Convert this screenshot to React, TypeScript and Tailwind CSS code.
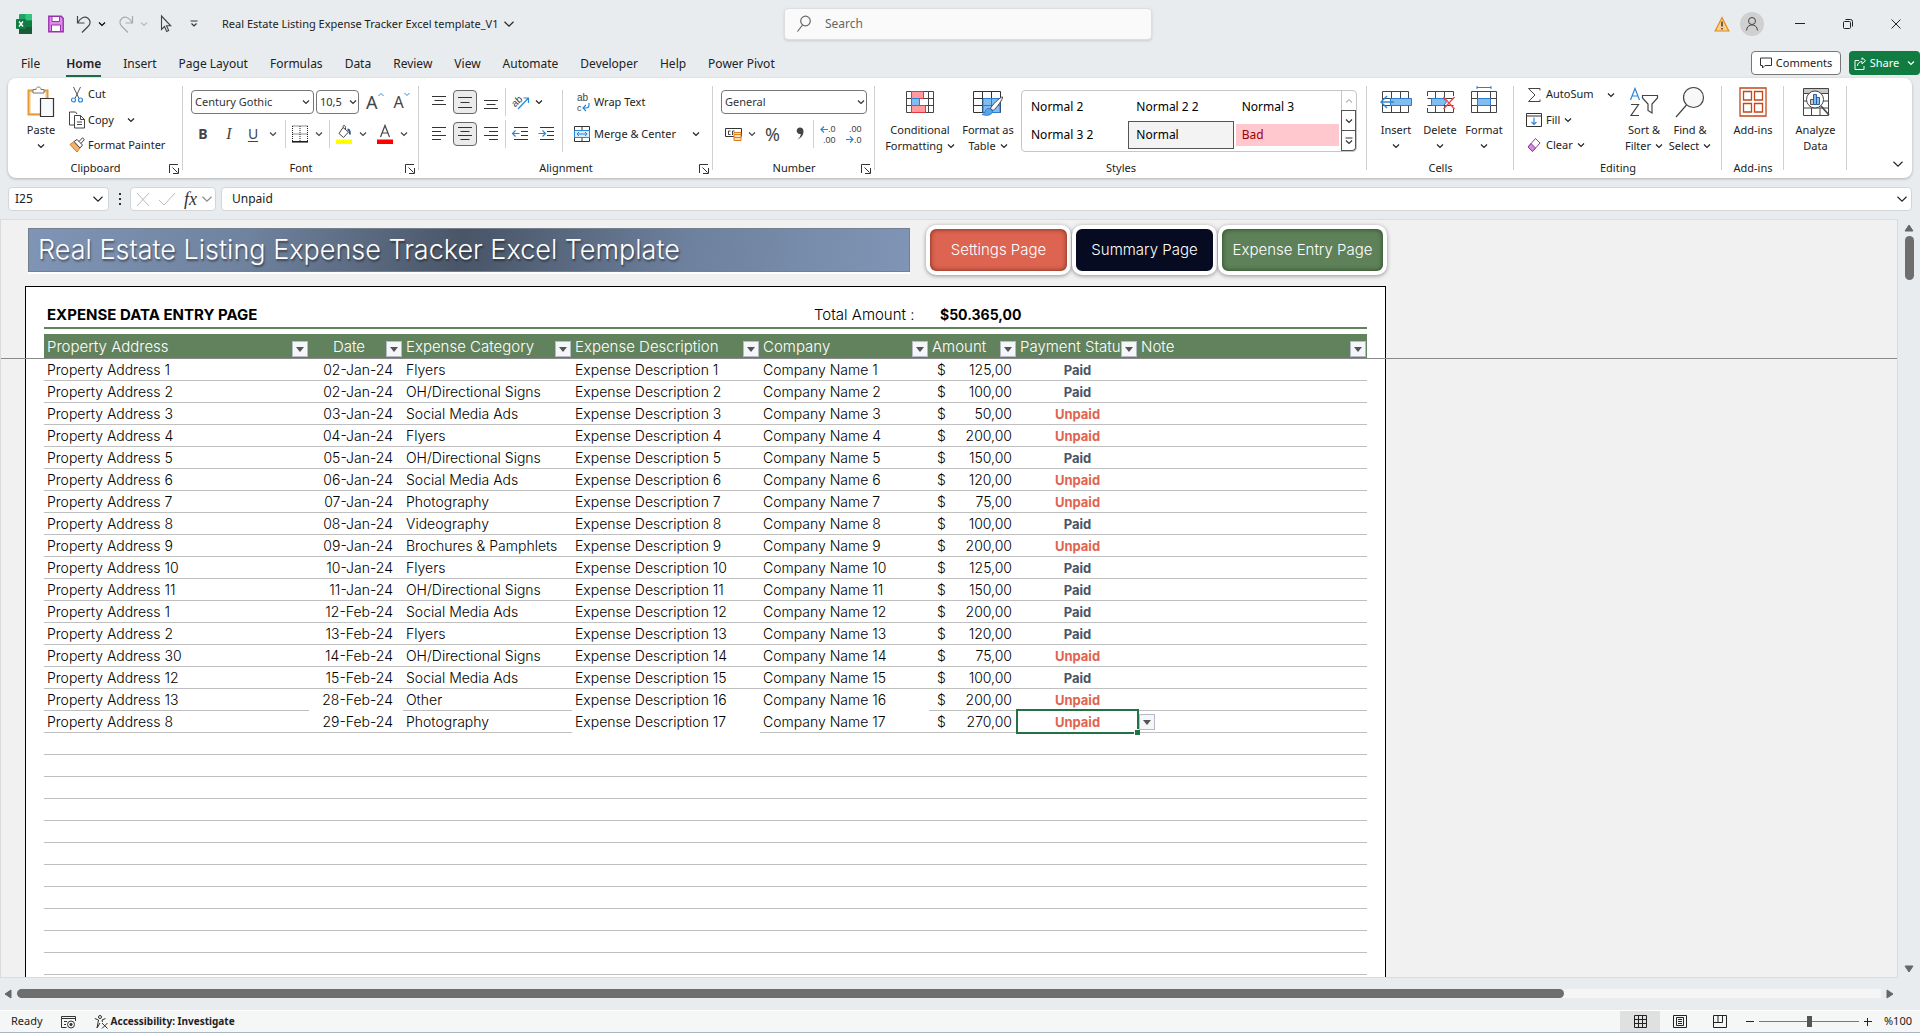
import { useState } from "react";
import type { ReactNode } from "react";
import clsx from "clsx";

type Status = "Paid" | "Unpaid";
type Expense = [string, string, string, string, Status];

// address, date, category, amount, status
const EXPENSES: Expense[] = [
  ["1", "02-Jan-24", "Flyers", "125,00", "Paid"],
  ["2", "02-Jan-24", "OH/Directional Signs", "100,00", "Paid"],
  ["3", "03-Jan-24", "Social Media Ads", "50,00", "Unpaid"],
  ["4", "04-Jan-24", "Flyers", "200,00", "Unpaid"],
  ["5", "05-Jan-24", "OH/Directional Signs", "150,00", "Paid"],
  ["6", "06-Jan-24", "Social Media Ads", "120,00", "Unpaid"],
  ["7", "07-Jan-24", "Photography", "75,00", "Unpaid"],
  ["8", "08-Jan-24", "Videography", "100,00", "Paid"],
  ["9", "09-Jan-24", "Brochures & Pamphlets", "200,00", "Unpaid"],
  ["10", "10-Jan-24", "Flyers", "125,00", "Paid"],
  ["11", "11-Jan-24", "OH/Directional Signs", "150,00", "Paid"],
  ["1", "12-Feb-24", "Social Media Ads", "200,00", "Paid"],
  ["2", "13-Feb-24", "Flyers", "120,00", "Paid"],
  ["30", "14-Feb-24", "OH/Directional Signs", "75,00", "Unpaid"],
  ["12", "15-Feb-24", "Social Media Ads", "100,00", "Paid"],
  ["13", "28-Feb-24", "Other", "200,00", "Unpaid"],
  ["8", "29-Feb-24", "Photography", "270,00", "Unpaid"],
];

const COLUMNS = [
  "Property Address",
  "Date",
  "Expense Category",
  "Expense Description",
  "Company",
  "Amount",
  "Payment Status",
  "Note",
];

const TABS = [
  "File",
  "Home",
  "Insert",
  "Page Layout",
  "Formulas",
  "Data",
  "Review",
  "View",
  "Automate",
  "Developer",
  "Help",
  "Power Pivot",
];

/* ---------- small shared pieces ---------- */

function Chevron({ size = 8, className }: { size?: number; className?: string }) {
  return (
    <svg width={size} height={size} viewBox="0 0 8 8" fill="none" stroke="currentColor" strokeWidth={size > 9 ? 0.75 : 1.2} className={clsx("shrink-0", className)}>
      <path d="M1 2.500 4 5.500 7 2.500" />
    </svg>
  );
}

function Svg({ w, h, children }: { w: number; h: number; children: ReactNode }) {
  return (
    <svg width={w} height={h} viewBox={`0 0 ${w} ${h}`} fill="none" stroke="#444" className="shrink-0 overflow-visible font-['Liberation_Sans']">
      {children}
    </svg>
  );
}

function Launcher() {
  return (
    <button aria-label="Open dialog" className="absolute right-1 bottom-1">
      <Svg w={10} h={10}>
        <path d="M.5 9V.5H9M3.500 3.500l5 5M9.500 4v5.500H4" stroke="#333" />
      </Svg>
    </button>
  );
}

function Group({ label, className, launcher, children }: { label: string; className: string; launcher?: boolean; children: ReactNode }) {
  return (
    <section className={clsx("relative shrink-0 flex flex-col", className)}>
      <div className="h-20 flex">{children}</div>
      <div className="h-5 text-center leading-5">{label}</div>
      {launcher && <Launcher />}
      <div className="absolute right-0 top-2 bottom-2 w-px bg-[#d0d0d0]" />
    </section>
  );
}

function BigButton({ icon, lines, arrow, className }: { icon: ReactNode; lines: string[]; arrow?: "below" | "inline"; className: string }) {
  return (
    <button className={clsx("flex flex-col items-center leading-4 pt-2", className)}>
      <span className="h-8 mb-1 flex items-center">{icon}</span>
      {lines.map((line, i) => (
        <span key={line} className="flex items-center gap-1 h-4 whitespace-nowrap">
          {line}
          {arrow === "inline" && i === lines.length - 1 && <Chevron />}
        </span>
      ))}
      {arrow === "below" && <Chevron className="mt-1" />}
    </button>
  );
}

function Divider({ className }: { className?: string }) {
  return <span className={clsx("w-px bg-[#d0d0d0] shrink-0", className ?? "h-7")} />;
}

function Lines({ rows, pressed, label }: { rows: string; pressed?: boolean; label: string }) {
  return (
    <button
      aria-label={label}
      className={clsx("w-6 h-6 flex items-center justify-center rounded-sm border", pressed ? "bg-[#ebebeb] border-[#666]" : "border-transparent")}
    >
      <Svg w={14} h={16}>
        <path d={rows} stroke="#333" />
      </Svg>
    </button>
  );
}

/* ---------- title bar and tabs ---------- */

function TitleBar() {
  return (
    <header className="h-12 flex items-center pl-4">
      <div className="flex-1 flex items-center">
        <Svg w={16} h={20}>
          <rect x="3" y="0" width="13" height="20" rx="1" fill="#21a366" stroke="none" />
          <path d="M9.500 0H16v6.500H9.500z" fill="#33c481" stroke="none" />
          <path d="M3 13h13v7H3z" fill="#185c37" stroke="none" />
          <path d="M9.500 6.500H16V13H9.500z" fill="#107c41" stroke="none" />
          <rect x="0" y="5" width="10" height="10" rx="1" fill="#107c41" stroke="none" />
          <path d="m3 7.500 4 5M7 7.500l-4 5" stroke="#fff" strokeWidth="1.400" />
        </Svg>
        <button aria-label="Save" className="ml-4">
          <Svg w={16} h={18}>
            <path d="M.8 1.200h12.400l2 2v13.600H.8z" fill="#dd8ce8" stroke="#9b2fae" strokeWidth="1.400" />
            <path d="M4 1.500h7.500v5H4zM3.500 10h9v6.500h-9z" fill="#fff" stroke="#9b2fae" />
          </Svg>
        </button>
        <button aria-label="Undo" className="ml-3 flex items-center gap-[6px]">
          <Svg w={16} h={20}>
            <path d="M1.500 2v7h7M1.800 8.500C5 3 9 2 12 4.200c3 2.500 2.500 6 0 8.300L6 18.500" strokeWidth="1.200" />
          </Svg>
          <Chevron />
        </button>
        <button aria-label="Redo" className="ml-3 flex items-center gap-[6px] text-[#bbb]">
          <svg width="16" height="20" viewBox="0 0 16 20" fill="none" stroke="#aaa" strokeWidth="1.200">
            <path d="M14.500 2v7h-7M14.200 8.500C11 3 7 2 4 4.200c-3 2.500-2.500 6 0 8.300l6 6" />
          </svg>
          <Chevron />
        </button>
        <button aria-label="Select objects" className="ml-3">
          <Svg w={12} h={18}>
            <path d="M1.500 1v13.500l3-3 2.200 5 2-1-2.200-4.700h4.200z" strokeWidth="1.100" />
          </Svg>
        </button>
        <button aria-label="Customize toolbar" className="ml-[18px]">
          <Svg w={8} h={8}>
            <path d="M.5 1h7M1.500 3.500 4 6l2.500-2.500" stroke="#333" strokeWidth="1.200" />
          </Svg>
        </button>
        <button className="ml-6 flex items-center gap-1 text-[11px] text-[#222]">
          Real Estate Listing Expense Tracker Excel template_V1
          <Chevron size={12} />
        </button>
      </div>
      <label className="w-[368px] h-8 flex items-center gap-[14px] px-3 rounded-sm bg-[#fafafa] border border-[#dcdfe1] shadow-sm">
        <Svg w={14} h={18}>
          <circle cx="8.500" cy="6" r="4.800" stroke="#666" strokeWidth="1.200" />
          <path d="m5.500 10-5 6.500" stroke="#666" strokeWidth="1.200" />
        </Svg>
        <input aria-label="Search" placeholder="Search" className="w-full bg-transparent outline-none text-xs placeholder:text-[#666]" />
      </label>
      <div className="flex-1 flex items-center justify-end">
        <Svg w={16} h={16}>
          <path d="m8 1.500 6.800 13.500H1.200z" fill="#fbd08f" stroke="#e08a1e" strokeWidth="1.200" />
          <path d="M8 5.500v5M8 12v1.500" stroke="#333" strokeWidth="1.400" />
        </Svg>
        <span className="ml-[10px] size-6 rounded-full bg-[#d0d0d0] flex items-center justify-center">
          <Svg w={14} h={16}>
            <circle cx="7" cy="5" r="3.500" />
            <path d="M1.500 14.500c.5-7.500 10.500-7.500 11 0" />
          </Svg>
        </span>
        <button aria-label="Minimize" className="ml-[30px]">
          <Svg w={12} h={12}>
            <path d="M1 5.500h10" stroke="#222" />
          </Svg>
        </button>
        <button aria-label="Restore" className="ml-9">
          <Svg w={12} h={12}>
            <rect x="1.500" y="3.500" width="7" height="7" rx="1" stroke="#222" />
            <path d="M3.500 1.500h5q2 0 2 2v5" stroke="#222" />
          </Svg>
        </button>
        <button aria-label="Close" className="ml-9 mr-[18px]">
          <Svg w={12} h={12}>
            <path d="m1.500 1.500 9 9m0-9-9 9" stroke="#222" />
          </Svg>
        </button>
      </div>
    </header>
  );
}

function TabBar() {
  return (
    <nav className="h-[30px] flex items-center pl-[10px] text-xs text-[#222]">
      {TABS.map((tab) => (
        <a key={tab} href="#" className="px-[11px] first:mr-1 h-[27px] flex items-stretch">
          <span className={clsx("leading-7 border-b-2 whitespace-nowrap", tab === "Home" ? "font-semibold border-[#1e6b4a]" : "border-transparent")}>{tab}</span>
        </a>
      ))}
      <div className="flex-1" />
      <button className="h-6 w-[90px] mr-2 shrink-0 flex items-center justify-center gap-1 rounded-sm border border-[#777] bg-white text-[11px]">
        <Svg w={12} h={12}>
          <path d="M.5 1h11v7.500H5L2.500 11V8.500h-2z" stroke="#333" />
        </Svg>
        Comments
      </button>
      <button className="h-6 w-[71px] shrink-0 flex items-center justify-center gap-1 rounded-sm bg-[#107c41] text-white text-[11px]">
        <svg width="12" height="13" viewBox="0 0 12 13" fill="none" stroke="#fff">
          <path d="M5 3.500H1v9h9V9M3.500 9c0-3 2-4.500 4.500-4.500V7l3.500-3.300L8 .8v2" />
        </svg>
        Share
        <Chevron className="ml-1" />
      </button>
    </nav>
  );
}

/* ---------- ribbon ---------- */

function ClipboardGroup() {
  return (
    <Group label="Clipboard" className="w-[175px]" launcher>
      <BigButton
        className="w-12 ml-[9px]"
        arrow="below"
        lines={["Paste"]}
        icon={
          <Svg w={30} h={32}>
            <path d="M2.500 4.500h19v24h-19z" fill="#fbe3bd" stroke="#e59a35" strokeWidth="2" />
            <path d="M5 7h14v20H5z" fill="#fff" stroke="none" />
            <path d="M7 7V3.500h3c0-3.300 5-3.300 5 0h3V7z" fill="#fff" stroke="#777" />
            <path d="M14.500 12.500h13v18h-13z" fill="#f7f9fb" stroke="#333" strokeWidth="1.200" />
          </Svg>
        }
      />
      <div className="flex flex-col pt-1 ml-1">
        <button className="h-[26px] flex items-center gap-[3px]">
          <Svg w={16} h={16}>
            <path d="M4.500 0 10 11.500M11.500 0 6 11.500" stroke="#555" />
            <circle cx="4.500" cy="13" r="2" stroke="#2b88d8" strokeWidth="1.200" />
            <circle cx="11.500" cy="13" r="2" stroke="#2b88d8" strokeWidth="1.200" />
          </Svg>
          Cut
        </button>
        <button className="h-[26px] flex items-center gap-[3px]">
          <Svg w={16} h={18}>
            <path d="M5.500 14H.5V1h6l1.500 2" />
            <path d="M5.500 4.500h6l4 4v8.500h-10zM11.500 4.500v4h4M8 11h5M8 13.500h5" />
          </Svg>
          Copy
          <Chevron className="ml-[10px]" />
        </button>
        <button className="h-[26px] flex items-center gap-[3px] whitespace-nowrap">
          <Svg w={16} h={16}>
            <path d="M1 7.500 8 15l3-4-6.500-6z" fill="#f6b26b" stroke="#e07b1a" />
            <path d="m5 4.500 3-2 5.500 5.500L11 11zM10 4.500 13.500.8l1.800 1.700L12 6.500" fill="#fff" />
          </Svg>
          Format Painter
        </button>
      </div>
    </Group>
  );
}

function FontGroup() {
  return (
    <Group label="Font" className="w-[236px]" launcher>
      <div className="flex flex-col pt-3 gap-2 pl-2">
        <div className="h-6 flex items-center">
          <label className="relative flex items-center text-[#333]">
            <select aria-label="Font" className="appearance-none w-[123px] h-6 pl-[3px] rounded-sm border border-[#777] bg-white">
              <option>Century Gothic</option>
            </select>
            <Chevron className="absolute right-1 pointer-events-none" />
          </label>
          <label className="relative flex items-center ml-[2px] text-[#333]">
            <select aria-label="Font size" className="appearance-none w-[43px] h-6 pl-[3px] rounded-sm border border-[#777] bg-white">
              <option>10,5</option>
            </select>
            <Chevron className="absolute right-[2px] pointer-events-none" />
          </label>
          <button aria-label="Increase font size" className="ml-[7px] flex items-start text-lg leading-5 text-[#444]">
            A
            <svg width="6" height="5" viewBox="0 0 6 5" fill="none" stroke="#2b88d8">
              <path d="M.5 4 3 1.500 5.500 4" />
            </svg>
          </button>
          <button aria-label="Decrease font size" className="ml-[10px] flex items-start text-base leading-5 text-[#444]">
            A
            <svg width="6" height="5" viewBox="0 0 6 5" fill="none" stroke="#2b88d8">
              <path d="M.5 1 3 3.500 5.500 1" />
            </svg>
          </button>
        </div>
        <div className="h-6 flex items-center text-sm text-[#444]">
          <button className="w-6 font-bold">B</button>
          <button className="w-6 ml-[2px] font-['Liberation_Serif'] italic text-base">I</button>
          <button className="w-6 underline underline-offset-2">U</button>
          <Chevron className="ml-1" />
          <Divider className="h-7 ml-2" />
          <button aria-label="Borders" className="ml-[6px] flex items-center gap-[7px]">
            <Svg w={16} h={18}>
              <path d="M.5 1h15M.5 1v15M15.500 1v15M8 1v15M.5 9h15" strokeDasharray="1 1" stroke="#222" />
              <path d="M0 16.800h16" stroke="#111" strokeWidth="1.500" />
            </Svg>
            <Chevron />
          </button>
          <Divider className="h-7 ml-[6px]" />
          <button aria-label="Fill color" className="ml-[6px] flex items-center gap-[7px]">
            <Svg w={16} h={20}>
              <path d="M7 3.500 3 9.500l4.500 4 5-5.500zM7 3.500c0-4 3-2 2.500 1.500" />
              <path d="M11.500 5.500c2 0 2.500 2 2.500 5" stroke="#2b579a" strokeWidth="1.800" />
              <path d="M0 15.500h16V20H0z" fill="#ff0" stroke="none" />
            </Svg>
            <Chevron />
          </button>
          <button aria-label="Font color" className="ml-[10px] flex items-center gap-[7px]">
            <Svg w={16} h={20}>
              <path d="M3.500 13 8 1.500 12.500 13M5 9h6" strokeWidth="1.200" />
              <path d="M0 15.500h16V20H0z" fill="#f00" stroke="none" />
            </Svg>
            <Chevron />
          </button>
        </div>
      </div>
    </Group>
  );
}

function AlignmentGroup() {
  return (
    <Group label="Alignment" className="w-[294px]" launcher>
      <div className="flex flex-col pt-3 gap-2 pl-2">
        <div className="h-6 flex items-center gap-[2px]">
          <Lines label="Top align" rows="M0 2.500h14M2.500 6.500h9M0 10.500h14" />
          <Lines label="Middle align" pressed rows="M0 3.500h14M2.500 8.500h9M0 13.500h14" />
          <Lines label="Bottom align" rows="M0 6.500h14M2.500 10.500h9M0 14.500h14" />
          <Divider />
          <button aria-label="Orientation" className="ml-1 flex items-center gap-[5px]">
            <Svg w={18} h={18}>
              <text x="0" y="11" transform="rotate(-42 6 9)" fontSize="10" fill="#444" stroke="none">ab</text>
              <path d="M6 16 16 5.500M11.500 5h5v5" stroke="#2b88d8" strokeWidth="1.200" />
            </Svg>
            <Chevron />
          </button>
        </div>
        <div className="h-6 flex items-center gap-[2px]">
          <Lines label="Align left" rows="M0 1.500h14M0 5.500h9M0 9.500h14M0 13.500h9" />
          <Lines label="Center" pressed rows="M0 1.500h14M2.500 5.500h9M0 9.500h14M2.500 13.500h9" />
          <Lines label="Align right" rows="M0 1.500h14M5 5.500h9M0 9.500h14M5 13.500h9" />
          <Divider />
          <button aria-label="Decrease indent" className="ml-1">
            <Svg w={16} h={16}>
              <path d="M2 1.500h14M9 5.500h7M9 9.500h7M2 13.500h14" stroke="#333" />
              <path d="M7.500 7.500h-7M3.500 4.500l-3 3 3 3" stroke="#2b88d8" strokeWidth="1.200" />
            </Svg>
          </button>
          <button aria-label="Increase indent" className="ml-2">
            <Svg w={16} h={16}>
              <path d="M2 1.500h14M9 5.500h7M9 9.500h7M2 13.500h14" stroke="#333" />
              <path d="M.5 7.500h7M4.500 4.500l3 3-3 3" stroke="#2b88d8" strokeWidth="1.200" />
            </Svg>
          </button>
        </div>
      </div>
      <Divider className="h-[62px] mt-3 ml-2" />
      <div className="flex flex-col pt-3 gap-2 pl-[11px]">
        <button className="h-6 flex items-center gap-1">
          <Svg w={16} h={20}>
            <text x="3" y="9" fontSize="10" fill="#444" stroke="none">ab</text>
            <text x="3" y="19" fontSize="9" fill="#444" stroke="none">c</text>
            <path d="M15 11v2q0 3-3 3H9.500M12 13l-3 3 3 3" stroke="#2b88d8" strokeWidth="1.200" />
          </Svg>
          Wrap Text
        </button>
        <button className="h-6 flex items-center gap-1 whitespace-nowrap">
          <Svg w={16} h={16}>
            <path d="M.5.500h15v15H.5zM.5 4.500h15M.5 11.500h15M8 .5v4M8 11.500v4" stroke="#333" />
            <path d="M.5 4.500h15v7H.5z" fill="#d9ebfa" stroke="#2b88d8" />
            <path d="M3 8h10M5 6 3 8l2 2M11 6l2 2-2 2" stroke="#2b88d8" />
          </Svg>
          Merge &amp; Center
          <Chevron className="ml-3" />
        </button>
      </div>
    </Group>
  );
}

function NumberGroup() {
  return (
    <Group label="Number" className="w-[162px]" launcher>
      <div className="flex flex-col pt-3 gap-2 pl-2">
        <label className="relative flex items-center text-[#333]">
          <select aria-label="Number format" className="appearance-none w-[146px] h-6 pl-[3px] rounded-sm border border-[#777] bg-white">
            <option>General</option>
          </select>
          <Chevron className="absolute right-[2px] pointer-events-none" />
        </label>
        <div className="h-6 flex items-center text-[#444]">
          <button aria-label="Accounting format" className="ml-1 flex items-center gap-[5px]">
            <Svg w={18} h={16}>
              <path d="M.5 2.500h16v8H.5z" stroke="#333" />
              <path d="M5.500 5h-2v3.500h2M7.500 9V5h2" />
              <path d="M9 8.500h7v6H9z" fill="#fde3c4" stroke="#e07b1a" />
              <path d="M9 6.500h7v2H9zM9 11.500h7" fill="#fde3c4" stroke="#e07b1a" />
            </Svg>
            <Chevron />
          </button>
          <button className="ml-[9px] text-lg leading-6">%</button>
          <button aria-label="Comma style" className="ml-[15px]">
            <Svg w={10} h={16}>
              <path d="M5 1.500a3.300 3.300 0 1 0 .8 6.500c-.3 2.500-1.500 4-3.300 5.500C6.500 12 8.800 8.500 8.500 5 8.300 2.500 6.800 1.500 5 1.500z" fill="#444" stroke="none" />
            </Svg>
          </button>
          <Divider className="h-7 ml-2" />
          <button aria-label="Increase decimal" className="ml-[6px]">
            <Svg w={16} h={20}>
              <path d="M8 5.500H1M4 2.500l-3 3 3 3" stroke="#2b88d8" strokeWidth="1.200" />
              <text x="8" y="8" fontSize="9" fill="#444" stroke="none">.0</text>
              <text x="3" y="19" fontSize="9" fill="#444" stroke="none">.00</text>
            </Svg>
          </button>
          <button aria-label="Decrease decimal" className="ml-[10px]">
            <Svg w={16} h={20}>
              <path d="M0 15.500h7M4 12.500l3 3-3 3" stroke="#2b88d8" strokeWidth="1.200" />
              <text x="3" y="8" fontSize="9" fill="#444" stroke="none">.00</text>
              <text x="8" y="19" fontSize="9" fill="#444" stroke="none">.0</text>
            </Svg>
          </button>
        </div>
      </div>
    </Group>
  );
}

function StylesGroup() {
  return (
    <Group label="Styles" className="w-[492px]">
      <BigButton
        className="w-[76px] ml-[7px]"
        arrow="inline"
        lines={["Conditional", "Formatting"]}
        icon={
          <Svg w={28} h={24}>
            <path d="M.5 1.500h27v21H.5zM.5 8.500h27M.5 15.500h27M5.500 1.500v21M22.500 1.500v21" stroke="#444" />
            <path d="M5.500 1.500h12v7h-12zM5.500 15.500h14v7h-14z" fill="#ff9a9f" stroke="#e0373f" />
            <path d="M5.500 8.500h8v7h-8z" fill="#83bdf0" stroke="#2b7cd3" />
          </Svg>
        }
      />
      <BigButton
        className="w-[60px]"
        arrow="inline"
        lines={["Format as", "Table"]}
        icon={
          <Svg w={32} h={28}>
            <path d="M11 10h17v14H11z" fill="#83bdf0" stroke="none" />
            <path d="M1.500 3.500h27v21h-27zM1.500 10.500h27M1.500 17.500h27M10.500 3.500v21M19.500 3.500v21" stroke="#333" />
            <path d="M11 10.500h17v14H11zM11 17.500h17M19.500 10.500v14" stroke="#2b7cd3" />
            <path d="M30.500 9c-2-.5-11 8.500-12 11.500l2.500 2C24.500 20.500 31 11 30.500 9z" fill="#fff" stroke="#444" />
            <path d="M17.500 20.500c-3-.5-4 1.500-4.500 3.500-.5 1.500-2 2-3 2.500 4.500 1.500 10.500 1 10.500-3.500z" fill="#5aa5e6" stroke="#2b7cd3" />
          </Svg>
        }
      />
      <div className="mt-3 ml-[3px] w-[336px] h-[62px] flex rounded-sm border border-[#c6c6c6]">
        <div className="flex-1 grid grid-cols-3 grid-rows-2 py-[2px] pl-px pr-[2px] text-xs text-black">
          <button className="text-left pl-2">Normal 2</button>
          <button className="text-left pl-2">Normal 2 2</button>
          <button className="text-left pl-2">Normal 3</button>
          <button className="text-left pl-2">Normal 3 2</button>
          <button className="text-left pl-[7px] border border-[#555] bg-[#f3f3f3]">Normal</button>
          <button className="text-left pl-[6px] ml-[2px] my-[3px] bg-[#ffc7ce] text-[#9c0006]">Bad</button>
        </div>
        <div className="w-[15px] flex flex-col text-[#333]">
          <button aria-label="Scroll up" className="flex-1 flex items-center justify-center border-l border-[#c6c6c6] text-[#bbb]">
            <Chevron className="rotate-180" />
          </button>
          <button aria-label="Scroll down" className="flex-1 flex items-center justify-center border border-[#555]">
            <Chevron />
          </button>
          <button aria-label="More styles" className="flex-1 flex items-center justify-center border border-t-0 border-[#555] rounded-br-sm">
            <Svg w={8} h={8}>
              <path d="M.5 1h7M1 3.500l3 3 3-3" stroke="#333" strokeWidth="1.200" />
            </Svg>
          </button>
        </div>
      </div>
    </Group>
  );
}

function CellsGroup() {
  const grid = "M2.500 3.500h26v21h-26zM2.500 10.500h26M2.500 17.500h26M11.500 3.500v21M20.500 3.500v21";
  return (
    <Group label="Cells" className="w-[147px]">
      <BigButton
        className="w-11 ml-[7px]"
        arrow="below"
        lines={["Insert"]}
        icon={
          <Svg w={32} h={28}>
            <path d={grid} />
            <path d="M10.500 10.500h21v7h-21z" fill="#83bdf0" stroke="#2b7cd3" />
            <path d="M14 14H1M7 8l-6 6 6 6" stroke="#2b88d8" strokeWidth="1.400" />
          </Svg>
        }
      />
      <BigButton
        className="w-11"
        arrow="below"
        lines={["Delete"]}
        icon={
          <Svg w={32} h={28}>
            <path d="M3.500 8V3.500h26V8M3.500 20v4.500h26V20M11.500 3.500v21M20.500 3.500v21M3.500 10.500h26M3.500 17.500h26" />
            <path d="M7.500 10.500h12l3 3.500-3 3.500h-12z" fill="#83bdf0" stroke="#2b7cd3" />
            <path d="m19.500 9 11 12m0-12-11 12" stroke="#f04a4a" strokeWidth="1.400" />
          </Svg>
        }
      />
      <BigButton
        className="w-11"
        arrow="below"
        lines={["Format"]}
        icon={
          <Svg w={28} h={32}>
            <path d="M7 1.500h14M7 0v3M21 0v3" stroke="#2b7cd3" />
            <path d="M1.500 5.500h25v21h-25zM1.500 12.500h25M1.500 19.500h25M7.500 5.500v21M20.500 5.500v21" />
            <path d="M7.500 12.500h13v7h-13z" fill="#83bdf0" stroke="#2b7cd3" />
          </Svg>
        }
      />
    </Group>
  );
}

function EditingGroup() {
  return (
    <Group label="Editing" className="w-[208px]">
      <div className="w-[104px] pl-3 pr-[3px] pt-1 flex flex-col">
        <button className="h-[26px] flex items-center gap-1">
          <Svg w={16} h={16}>
            <path d="M14 3.500V1.500H2.500L9 8l-6.500 6.500H14v-2" />
          </Svg>
          AutoSum
          <Chevron className="ml-auto" />
        </button>
        <button className="h-[26px] flex items-center gap-1">
          <Svg w={16} h={16}>
            <path d="M.5 1.500h15v13H.5zM.5 4h15" stroke="#333" />
            <path d="M8 5.500v7M5.500 10 8 12.500l2.500-2.500" stroke="#2b88d8" strokeWidth="1.200" />
          </Svg>
          Fill
          <Chevron />
        </button>
        <button className="h-[26px] flex items-center gap-1">
          <Svg w={16} h={16}>
            <path d="M9.500 1.500 14 6l-7.500 8.500L2 10z" fill="#fff" stroke="#8c3b9e" />
            <path d="m5 6.500 4.500 4.500-3 3.500L2 10z" fill="#d48be0" stroke="#8c3b9e" />
          </Svg>
          Clear
          <Chevron />
        </button>
      </div>
      <BigButton
        className="w-[52px]"
        arrow="inline"
        lines={["Sort &", "Filter"]}
        icon={
          <Svg w={30} h={32}>
            <path d="M1.500 14 6 2.500 10.500 14M3 10h6" stroke="#2b88d8" strokeWidth="1.200" />
            <path d="M2 18.500h7.500L2 29.500h8" strokeWidth="1.200" />
            <path d="M13.500 9.500h15v2.500l-5.500 6v9l-4-2.500V18l-5.500-6z" strokeWidth="1.200" />
          </Svg>
        }
      />
      <BigButton
        className="w-10"
        arrow="inline"
        lines={["Find &", "Select"]}
        icon={
          <Svg w={30} h={32}>
            <circle cx="18.500" cy="11.500" r="10" fill="#f8f8f8" strokeWidth="1.200" />
            <path d="M11.500 19 1 31" strokeWidth="1.200" />
          </Svg>
        }
      />
    </Group>
  );
}

function Ribbon() {
  return (
    <div className="mx-2 h-[100px] flex bg-white rounded-lg shadow-[0_1px_3px_rgba(0,0,0,0.25)] text-[11px] text-[#222]">
      <ClipboardGroup />
      <FontGroup />
      <AlignmentGroup />
      <NumberGroup />
      <StylesGroup />
      <CellsGroup />
      <EditingGroup />
      <Group label="Add-ins" className="w-[62px]">
        <BigButton
          className="w-full"
          lines={["Add-ins"]}
          icon={
            <Svg w={28} h={30}>
              <path d="M1 1h26v28H1zM4.500 4.500h8v8.500h-8zM15.500 4.500h8v8.500h-8zM4.500 16.500h8V25h-8zM15.500 16.500h8V25h-8z" stroke="#c4471c" strokeWidth="1.300" />
            </Svg>
          }
        />
      </Group>
      <Group label="" className="w-[63px]">
        <BigButton
          className="w-full"
          lines={["Analyze", "Data"]}
          icon={
            <Svg w={28} h={30}>
              <path d="M1.500 1.500h25v27h-25z" />
              <path d="M2 2h24v4H2z" fill="#c8c8c8" stroke="none" />
              <path d="M1.500 6.500h25M1.500 14h25M1.500 21h25M9.500 21v7.500M18 21v7.500" />
              <circle cx="13" cy="12.500" r="8.500" fill="#fff" />
              <path d="m19 19 8 9" strokeWidth="1.600" />
              <path d="M8.500 12.500h3v5h-3z" fill="#ccc" stroke="#555" />
              <path d="M11.500 7.500h3v10h-3zM14.500 10.500h3v7h-3z" fill="#83bdf0" stroke="#2b5f9e" />
            </Svg>
          }
        />
      </Group>
      <div className="flex-1 flex items-end justify-end p-2">
        <button aria-label="Collapse ribbon">
          <Chevron size={12} />
        </button>
      </div>
    </div>
  );
}

function FormulaBar() {
  return (
    <div className="mx-2 mt-[9px] h-6 flex items-center text-xs text-[#222]">
      <div className="w-[101px] h-6 flex items-center bg-white border border-[#d3d6d8] rounded-sm pr-1">
        <input aria-label="Name box" defaultValue="I25" className="w-full min-w-0 pl-[6px] outline-none" />
        <Chevron size={12} />
      </div>
      <span className="w-[21px] flex flex-col items-center gap-[3px]">
        <i className="size-[2px] bg-[#333]" />
        <i className="size-[2px] bg-[#333]" />
        <i className="size-[2px] bg-[#333]" />
      </span>
      <div className="w-[86px] h-6 flex items-center bg-white border border-[#d3d6d8] rounded-sm pl-[5px]">
        <Svg w={14} h={16}>
          <path d="m1 2 12 13M13 2 1 15" stroke="#bbb" />
        </Svg>
        <span className="w-2" />
        <Svg w={18} h={16}>
          <path d="m1 9 5 5L17 2" stroke="#bbb" />
        </Svg>
        <button className="ml-2 font-['Liberation_Serif'] italic text-lg leading-5 text-[#333]">fx</button>
        <Chevron size={12} className="ml-1 text-[#888]" />
      </div>
      <div className="ml-[5px] flex-1 h-6 flex items-center bg-white border border-[#d3d6d8] rounded-sm pr-[3px]">
        <input aria-label="Formula" defaultValue="Unpaid" className="flex-1 pl-[10px] outline-none" />
        <Chevron size={12} />
      </div>
    </div>
  );
}

/* ---------- worksheet ---------- */

function FilterButton({ label }: { label: string }) {
  return (
    <button aria-label={label} className="shrink-0 size-4 flex items-center justify-center bg-[#f4f6fa] border border-[#b5bac4]">
      <svg width="8" height="5" viewBox="0 0 8 5">
        <path d="M0 0h8L4 5z" fill="#555" />
      </svg>
    </button>
  );
}

function ExpenseTable() {
  const cell = "h-[22px] p-0 border-b border-[#bfbfbf] whitespace-nowrap";
  const open = "h-[22px] p-0 whitespace-nowrap";
  return (
    <table className="w-full table-fixed border-separate border-spacing-0 text-sm leading-5">
      <colgroup>
        <col className="w-[265px]" />
        <col className="w-[94px]" />
        <col className="w-[169px]" />
        <col className="w-[188px]" />
        <col className="w-[169px]" />
        <col className="w-[88px]" />
        <col className="w-[121px]" />
        <col />
      </colgroup>
      <thead>
        <tr>
          {COLUMNS.map((name) => (
            <th key={name} className="h-[25px] p-0 bg-[#62825d] text-[15px] font-light text-white">
              <div className="h-[25px] flex items-center">
                <span className={clsx("flex-1 overflow-hidden whitespace-nowrap pl-[3px]", name === "Date" ? "text-center" : "text-left")}>{name}</span>
                <span className="pt-[5px] pr-px">
                  <FilterButton label={`Filter ${name}`} />
                </span>
              </div>
            </th>
          ))}
        </tr>
      </thead>
      <tbody className="font-light text-black">
        {EXPENSES.map(([address, date, category, amount, status], i) => {
          const last = i === EXPENSES.length - 1;
          const gap = i === EXPENSES.length - 2 ? open : cell;
          return (
            <tr key={i}>
              <td className={clsx(cell, "pl-[3px]")}>Property Address {address}</td>
              <td className={clsx(gap, "text-right pr-[10px]")}>{date}</td>
              <td className={clsx(cell, "pl-[3px]")}>{category}</td>
              <td className={clsx(i >= EXPENSES.length - 2 ? open : cell, "pl-[3px]")}>Expense Description {i + 1}</td>
              <td className={clsx(gap, "pl-[3px]")}>Company Name {i + 1}</td>
              <td className={cell}>
                <div className="flex justify-between pl-2 pr-[5px]">
                  <span>$</span>
                  <span>{amount}</span>
                </div>
              </td>
              <td className={clsx(cell, "relative text-center text-[13px] font-bold", status === "Paid" ? "text-[#4a5364]" : "text-[#df6450]")}>
                {status}
                {last && (
                  <>
                    <div className="absolute -inset-y-[2px] -inset-x-px border-2 border-[#217346] pointer-events-none" />
                    <div className="absolute -right-[2px] -bottom-[3px] size-[6px] bg-[#217346] border-l border-t border-white" />
                    <div className="absolute left-full top-[3px] ml-px flex">
                      <FilterButton label="Choose status" />
                    </div>
                  </>
                )}
              </td>
              <td className={cell} />
            </tr>
          );
        })}
        {Array.from({ length: 11 }, (_, i) => (
          <tr key={`blank-${i}`}>
            <td colSpan={8} className={cell} />
          </tr>
        ))}
      </tbody>
    </table>
  );
}

function Sheet() {
  return (
    <main className="relative flex-1 min-w-0 overflow-hidden bg-[#f1f1f1] border border-[#d9dcde] pl-6 pt-[3px] font-['Inter']">
      <div className="flex items-center gap-4 h-[54px]">
        <h1 className="ml-[3px] w-[882px] h-11 flex items-center pl-[9px] text-[27px] font-light text-white border border-[#75808f] bg-[linear-gradient(100deg,#8095b6_0%,#6f829e_25%,#4a5668_49%,#4c596c_52%,#6e819e_75%,#8095b6_100%)] shadow-[0_2px_0_#fff] [text-shadow:1px_2px_2px_rgba(0,0,0,0.45)]">
          Real Estate Listing Expense Tracker Excel Template
        </h1>
        <div className="flex gap-px text-[15px] font-light text-white">
          <a href="#" className="w-[145px] h-[50px] flex items-center justify-center rounded-[10px] border-4 border-white bg-[#dc6450] shadow-[0_1px_4px_rgba(0,0,0,0.4),inset_0_0_5px_rgba(90,20,10,0.8)]">
            Settings Page
          </a>
          <a href="#" className="w-[145px] h-[50px] flex items-center justify-center rounded-[10px] border-4 border-white bg-[#070b22] shadow-[0_1px_4px_rgba(0,0,0,0.4)]">
            Summary Page
          </a>
          <a href="#" className="w-[169px] h-[50px] flex items-center justify-center rounded-[10px] border-4 border-white bg-[#5f8159] shadow-[0_1px_4px_rgba(0,0,0,0.4),inset_0_0_5px_rgba(20,50,20,0.8)]">
            Expense Entry Page
          </a>
        </div>
      </div>
      <div className="mt-[9px] w-[1361px] bg-white border border-black px-[18px] pb-10">
        <div className="h-[42px] pt-4 flex items-center border-b-2 border-[#62825d] text-black">
          <h2 className="pl-[3px] text-[15px] font-bold flex-1">EXPENSE DATA ENTRY PAGE</h2>
          <p className="w-[104px] text-[15px] font-light whitespace-nowrap">Total Amount :</p>
          <p className="ml-[22px] w-[427px] text-sm font-bold">$50.365,00</p>
        </div>
        <div className="mt-[5px]">
          <ExpenseTable />
        </div>
      </div>
      {/* frozen pane edge */}
      <div className="absolute left-0 right-0 top-[138px] h-px bg-[#8a8a8a]" />
    </main>
  );
}

function Arrow({ className }: { className?: string }) {
  return (
    <svg width="8" height="10" viewBox="0 0 8 10" className={clsx("shrink-0", className)}>
      <path d="M7 1v8L1 5z" fill="#666" stroke="#666" strokeLinejoin="round" />
    </svg>
  );
}

function StatusBar() {
  const [zoom, setZoom] = useState(100);
  return (
    <footer className="h-[23px] flex items-center bg-[#f5f6f6] border-t border-white border-b border-b-[#aab7c4] pl-[11px] pr-2 text-[11px] text-[#222]">
      <span>Ready</span>
      <button aria-label="Record macro" className="ml-[18px]">
        <Svg w={15} h={14}>
          <path d="M5.500 12.500H.5v-11h14V6M.5 3.500h14M3 6.500h3M3 9.500h2" stroke="#333" />
          <circle cx="10" cy="9.500" r="3.500" stroke="#333" />
          <circle cx="10" cy="9.500" r="1.200" fill="#333" />
        </Svg>
      </button>
      <button className="ml-[18px] flex items-center gap-[3px] text-[10px] font-bold">
        <Svg w={14} h={14}>
          <circle cx="6" cy="2" r="1.500" stroke="#333" />
          <path d="M.8 3.500 4.500 5 3 13M11.500 3.500 8 5l.5 2M6 8l-3 5M8 8l5.500 5.500M13.500 8 8 13.500" stroke="#333" />
        </Svg>
        Accessibility: Investigate
      </button>
      <div className="flex-1" />
      <button aria-label="Normal view" className="w-10 h-full flex items-center justify-center bg-[#e0e0e0]">
        <Svg w={13} h={13}>
          <path d="M.5.500h12v12H.5zM.5 4.500h12M.5 8.500h12M4.500.500v12M8.500.500v12" stroke="#222" />
        </Svg>
      </button>
      <button aria-label="Page layout view" className="w-10 h-full flex items-center justify-center">
        <Svg w={14} h={13}>
          <path d="M.5.500h13v12H.5zM3.500 2.500h7v8h-7zM5 4.500h4M5 6.500h4M5 8.500h4" stroke="#222" />
        </Svg>
      </button>
      <button aria-label="Page break view" className="w-10 h-full flex items-center justify-center">
        <Svg w={14} h={13}>
          <path d="M.5.500h13v12H.5zM.5 7.500h9v-7M5 .5v7" stroke="#222" />
        </Svg>
      </button>
      <button aria-label="Zoom out" className="ml-[5px]">
        <Svg w={10} h={10}>
          <path d="M1 4.500h8" stroke="#222" />
        </Svg>
      </button>
      <input
        type="range"
        aria-label="Zoom"
        min={10}
        max={190}
        value={zoom}
        onChange={(e) => setZoom(Number(e.target.value))}
        className="mx-1 w-[100px] h-3 appearance-none bg-[linear-gradient(#777,#777)] bg-[length:100%_1px] bg-center bg-no-repeat [&::-webkit-slider-thumb]:appearance-none [&::-webkit-slider-thumb]:w-[5px] [&::-webkit-slider-thumb]:h-[11px] [&::-webkit-slider-thumb]:bg-[#555]"
      />
      <button aria-label="Zoom in">
        <Svg w={10} h={10}>
          <path d="M1 4.500h8M4.500 1v8" stroke="#222" />
        </Svg>
      </button>
      <span className="w-[39px] text-right">%{zoom}</span>
    </footer>
  );
}

export default function App() {
  return (
    <div className="h-screen flex flex-col overflow-hidden bg-[#e8ecef] font-['Noto_Sans',sans-serif]">
      <TitleBar />
      <TabBar />
      <Ribbon />
      <FormulaBar />
      <div className="mt-2 flex-1 min-h-0 flex">
        <Sheet />
        <div className="w-[22px] flex flex-col items-center py-1">
          <Arrow className="rotate-90" />
          <div className="flex-1 w-[9px] pt-[3px]">
            <div className="h-11 rounded-full bg-[#6e6e6e]" />
          </div>
          <Arrow className="-rotate-90" />
        </div>
      </div>
      <div className="h-8 flex items-center pl-1 pr-[26px] pb-px">
        <Arrow />
        <div className="flex-1 mx-[5px] bg-[#f5f5f5]">
          <div className="w-[83%] h-[9px] rounded-full bg-[#6e6e6e]" />
        </div>
        <Arrow className="rotate-180" />
      </div>
      <StatusBar />
    </div>
  );
}
